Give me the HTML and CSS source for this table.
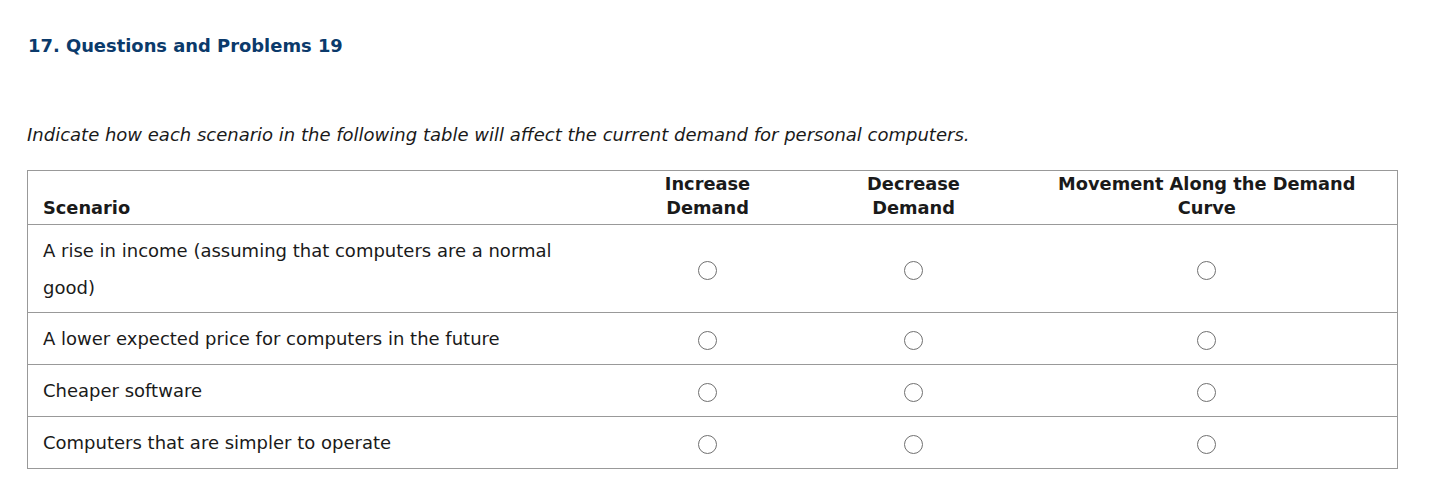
FILE: index.html
```html
<!DOCTYPE html>
<html>
<head>
<meta charset="utf-8">
<link rel="stylesheet" href="styles.css">
</head>
<body>
<div class="page">
  <h1 class="title">17. Questions and Problems 19</h1>
  <p class="prompt">Indicate how each scenario in the following table will affect the current demand for personal computers.</p>
  <table class="grid">
    <colgroup>
      <col class="c-scn">
      <col class="c-inc">
      <col class="c-dec">
      <col class="c-mov">
    </colgroup>
    <thead>
      <tr>
        <th class="h-left">Scenario</th>
        <th>Increase<br>Demand</th>
        <th>Decrease<br>Demand</th>
        <th>Movement Along the Demand<br>Curve</th>
      </tr>
    </thead>
    <tbody>
      <tr>
        <td class="scn two-line">A rise in income (assuming that computers are a normal good)</td>
        <td class="opt"><span class="radio"></span></td>
        <td class="opt"><span class="radio"></span></td>
        <td class="opt"><span class="radio"></span></td>
      </tr>
      <tr>
        <td class="scn">A lower expected price for computers in the future</td>
        <td class="opt"><span class="radio"></span></td>
        <td class="opt"><span class="radio"></span></td>
        <td class="opt"><span class="radio"></span></td>
      </tr>
      <tr>
        <td class="scn">Cheaper software</td>
        <td class="opt"><span class="radio"></span></td>
        <td class="opt"><span class="radio"></span></td>
        <td class="opt"><span class="radio"></span></td>
      </tr>
      <tr>
        <td class="scn">Computers that are simpler to operate</td>
        <td class="opt"><span class="radio"></span></td>
        <td class="opt"><span class="radio"></span></td>
        <td class="opt"><span class="radio"></span></td>
      </tr>
    </tbody>
  </table>
</div>
</body>
</html>
```
FILE: styles.css
```css
html, body {
  margin: 0;
  padding: 0;
  background: #fff;
}
body {
  font-family: "DejaVu Sans", Verdana, sans-serif;
  color: #1a1a1a;
}
.page {
  padding: 36px 0 0 27px;
}
.title {
  margin: 0 0 0 1px;
  font-size: 17.9px;
  line-height: 20px;
  font-weight: bold;
  color: #0b3a6b;
}
.prompt {
  margin: 69px 0 25px 0;
  font-size: 18px;
  line-height: 20px;
  font-style: italic;
}
.grid {
  border-collapse: collapse;
  table-layout: fixed;
  width: 1370px;
  font-size: 18px;
}
.c-scn { width: 577px; }
.c-inc { width: 206px; }
.c-dec { width: 206px; }
.c-mov { width: 381px; }
.grid th,
.grid td {
  border: 1px solid #999;
}
.grid th {
  border-left: none;
  border-right: none;
  font-size: 17.8px;
  font-weight: bold;
  line-height: 24px;
  padding: 1px 8px 4px;
  vertical-align: bottom;
  text-align: center;
}
.grid th:first-child { border-left: 1px solid #999; }
.grid th:last-child { border-right: 1px solid #999; }
.grid th.h-left {
  text-align: left;
  padding-left: 15px;
}
.grid td {
  border-left: none;
  border-right: none;
  line-height: 37px;
  padding: 7px 8px;
  vertical-align: middle;
}
.grid td:first-child { border-left: 1px solid #999; }
.grid td:last-child { border-right: 1px solid #999; }
.grid td.scn {
  padding-left: 15px;
  padding-right: 20px;
}
.grid td.scn.two-line {
  padding-bottom: 6px;
}
.grid td.opt {
  text-align: center;
}
.radio {
  display: inline-block;
  width: 19px;
  height: 19px;
  box-sizing: border-box;
  border: 1.5px solid #707070;
  border-radius: 50%;
  vertical-align: middle;
}
```
